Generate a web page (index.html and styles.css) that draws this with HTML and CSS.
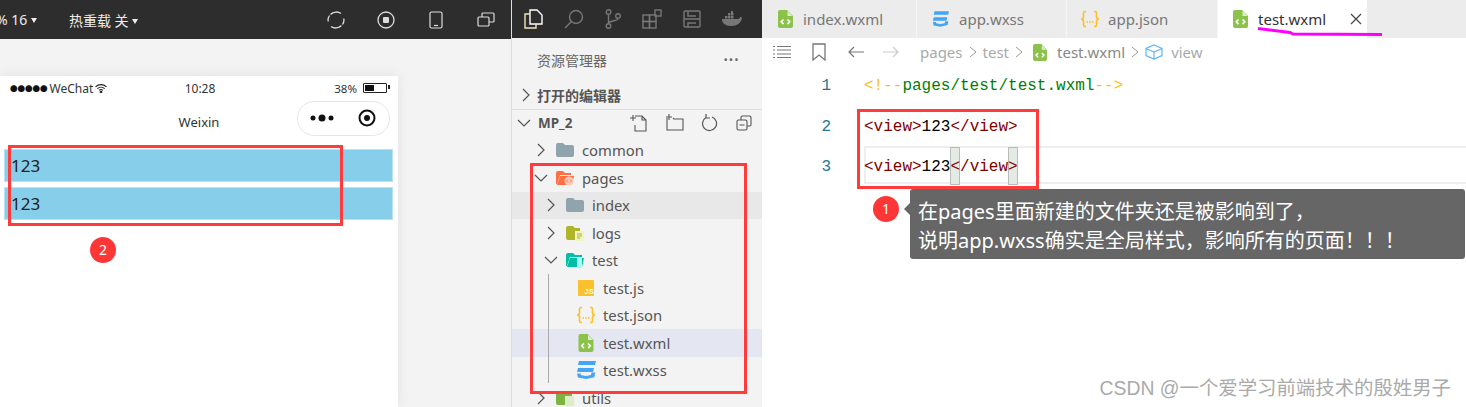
FILE: index.html
```html
<!DOCTYPE html>
<html lang="zh-CN">
<head>
<meta charset="UTF-8" />
<title>test.wxml</title>
<link rel="stylesheet" href="styles.css">
</head>
<body>

<svg class="defs" width="0" height="0">
  <symbol id="i-wxml" viewBox="0 0 15 18">
    <path d="M2 0h7l6 6v10a2 2 0 0 1-2 2H2a2 2 0 0 1-2-2V2a2 2 0 0 1 2-2z" fill="#8bc34a"/>
    <path d="M9.500 1v5h5z" fill="#dcedc8"/>
    <path d="M5.500 9.500l-2.300 2.300 2.300 2.300M9.500 9.500l2.300 2.300-2.300 2.300" fill="none" stroke="#fff" stroke-width="1.600"/>
  </symbol>
  <symbol id="i-wxss" viewBox="0 0 20 18">
    <path d="M3 0h17l-1 4H2z M2 7h16l-1 4H1z" fill="#42a5f5"/>
    <path d="M1 12.500l4 0-.4 1.500 5.400 1 5-1 .5-2.500h3.800l-1 4.700L10 18l-8-1.500z" fill="#42a5f5"/>
  </symbol>
  <symbol id="i-json" viewBox="0 0 20 18">
    <path d="M6 1.500H5A1.500 1.500 0 0 0 3.500 3v3.500C3.500 8 2.500 9 1 9c1.500 0 2.500 1 2.500 2.500V15A1.500 1.500 0 0 0 5 16.500h1M14 1.500h1A1.500 1.500 0 0 1 16.500 3v3.500C16.500 8 17.500 9 19 9c-1.500 0-2.500 1-2.500 2.500V15a1.500 1.500 0 0 1-1.500 1.500h-1" fill="none" stroke="#fbc02d" stroke-width="1.600"/>
    <path d="M6.500 12h1.500M9.300 12h1.500M12 12h1.500" stroke="#fbc02d" stroke-width="1.400"/>
  </symbol>
  <symbol id="i-js" viewBox="0 0 20 18">
    <rect x="2" y="1" width="16" height="16" rx="1" fill="#fbc02d"/>
    <text x="8.500" y="15" class="js-label">JS</text>
  </symbol>
  <symbol id="i-folder" viewBox="0 0 18 16">
    <path d="M2 1h5l2 2h7a2 2 0 0 1 2 2v8a2 2 0 0 1-2 2H2a2 2 0 0 1-2-2V3a2 2 0 0 1 2-2z" fill="#90a4ae"/>
  </symbol>
  <symbol id="i-right" viewBox="0 0 14 14">
    <path d="M4 1l6 6-6 6" fill="none" stroke="#555" stroke-width="1.200"/>
  </symbol>
  <symbol id="i-down" viewBox="0 0 14 14">
    <path d="M1 4l6 6 6-6" fill="none" stroke="#555" stroke-width="1.200"/>
  </symbol>
</svg>

<div class="page">

  <!-- simulator -->
  <section class="sim">
    <div class="sim-bar">
      <span class="sim-zoom">% 16 <i class="caret"></i></span>
      <span class="sim-reload">热重载 关 <i class="caret"></i></span>
      <div class="sim-tools">
        <svg width="18" height="18" viewBox="0 0 18 18" fill="none" stroke="#ddd" stroke-width="1.300"><path d="M3.500 3.500A8 8 0 0 1 14 2.500M14.500 14.500A8 8 0 0 1 4 15.500M1.200 10.500A8 8 0 0 1 2.500 4.500M16.800 7.500A8 8 0 0 1 15.500 13.500"/></svg>
        <svg width="18" height="18" viewBox="0 0 18 18" fill="none"><circle cx="9" cy="9" r="8" stroke="#ddd" stroke-width="1.300"/><rect x="6" y="6" width="6" height="6" rx="1" fill="#ddd"/></svg>
        <svg width="14" height="18" viewBox="0 0 14 18" fill="none" stroke="#ddd" stroke-width="1.200"><rect x="1" y="1" width="12" height="16" rx="1.500"/><path d="M5 14.500h4"/></svg>
        <svg width="18" height="16" viewBox="0 0 18 16" fill="none" stroke="#ddd" stroke-width="1.200"><rect x="1" y="5" width="11" height="9" rx="1"/><path d="M5 5V2a1 1 0 0 1 1-1h10a1 1 0 0 1 1 1v7a1 1 0 0 1-1 1h-4"/></svg>
      </div>
    </div>
    <div class="phone">
      <div class="status">
        <span class="status-left"><span class="signal">●●●●●</span> WeChat
          <svg width="12" height="9" viewBox="0 0 12 9" fill="none" stroke="#222" stroke-width="1.100"><path d="M.5 2.800a8 8 0 0 1 11 0M2.300 4.700a5.500 5.500 0 0 1 7.400 0M4 6.400a3 3 0 0 1 4 0"/><circle cx="6" cy="8" r=".8" fill="#222"/></svg>
        </span>
        <span class="status-time">10:28</span>
        <span class="status-right">38%
          <span class="battery"><span class="battery-level"></span></span>
        </span>
      </div>
      <div class="nav">
        <span></span>
        <span class="nav-title">Weixin</span>
        <div class="capsule">
          <svg width="24" height="8" viewBox="0 0 24 8" fill="#111"><circle cx="3" cy="4" r="2.500"/><circle cx="12" cy="4" r="3.500"/><circle cx="21" cy="4" r="2.500"/></svg>
          <svg width="18" height="18" viewBox="0 0 18 18" fill="none"><circle cx="9" cy="9" r="7.500" stroke="#111" stroke-width="2"/><circle cx="9" cy="9" r="3" fill="#111"/></svg>
        </div>
      </div>
      <div class="blocks">
        <div class="block">123</div>
        <div class="block">123</div>
      </div>
    </div>
  </section>

  <!-- explorer -->
  <section class="explorer">
    <div class="activity">
      <svg width="20" height="20" viewBox="0 0 20 20" fill="none" stroke="#fff" stroke-width="1.400"><path d="M7 1h7l5 5v9H7z"/><path d="M7 5H2v14h11v-4" stroke="#f5e6b8"/></svg>
      <svg width="20" height="20" viewBox="0 0 20 20" fill="none" stroke="#777" stroke-width="1.400"><circle cx="12" cy="8" r="6.500"/><path d="M7.500 12.500L1 19"/></svg>
      <svg width="16" height="20" viewBox="0 0 16 20" fill="none" stroke="#777" stroke-width="1.400"><circle cx="3.500" cy="3" r="2.300"/><circle cx="3.500" cy="17" r="2.300"/><circle cx="13" cy="7" r="2.300"/><path d="M3.500 5.500v9M13 9.500c0 3-9.500 2-9.500 5"/></svg>
      <svg width="20" height="20" viewBox="0 0 20 20" fill="none" stroke="#777" stroke-width="1.400"><rect x="1" y="6" width="6.500" height="6.500"/><rect x="1" y="12.500" width="6.500" height="6.500"/><rect x="7.500" y="12.500" width="6.500" height="6.500"/><rect x="7.500" y="6" width="6.500" height="6.500"/><rect x="13" y="1" width="6" height="6"/></svg>
      <svg width="18" height="18" viewBox="0 0 18 18" fill="none" stroke="#777" stroke-width="1.400"><rect x="1" y="1" width="16" height="16" rx="1"/><path d="M1 9h16M5 1v5h8M5 17v-4h8"/></svg>
      <svg width="20" height="16" viewBox="0 0 20 16" fill="#777"><path d="M0 8h16c1 0 2-1 2-2 1 0 2 0 2 1-1 5-5 8-11 8C3 15 0 12 0 8z"/><rect x="3" y="5" width="2.500" height="2.500"/><rect x="6" y="5" width="2.500" height="2.500"/><rect x="9" y="5" width="2.500" height="2.500"/><rect x="6" y="2" width="2.500" height="2.500"/><rect x="9" y="2" width="2.500" height="2.500"/><rect x="9" y="0" width="2" height="2"/></svg>
    </div>
    <div class="explorer-head">
      <span>资源管理器</span>
      <span class="more">···</span>
    </div>
    <div class="section-row">
      <svg width="14" height="14"><use href="#i-right"/></svg>
      <span>打开的编辑器</span>
    </div>
    <div class="project-row">
      <svg width="14" height="14"><use href="#i-down"/></svg>
      <span class="project-name">MP_2</span>
      <div class="project-tools">
        <svg width="18" height="18" viewBox="0 0 18 18" fill="none" stroke="#555" stroke-width="1.100"><path d="M5 2h7l4 4v11H5v-6M12 2v4h4M0 4h6M3 1v6"/></svg>
        <svg width="18" height="18" viewBox="0 0 18 18" fill="none" stroke="#555" stroke-width="1.100"><path d="M1 4v12h16V5H8L7 4M0 3h6M3 0v6"/></svg>
        <svg width="16" height="18" viewBox="0 0 16 18" fill="none" stroke="#555" stroke-width="1.200"><path d="M4 3.500A7 7 0 1 0 10 3M4 0v4h4"/></svg>
        <svg width="16" height="16" viewBox="0 0 16 16" fill="none" stroke="#555" stroke-width="1.100"><rect x="1" y="5" width="10" height="10" rx="1.500"/><path d="M5 5V2.500A1.500 1.500 0 0 1 6.500 1h7A1.500 1.500 0 0 1 15 2.500v7a1.500 1.500 0 0 1-1.500 1.500H11M3.500 10h5"/></svg>
      </div>
    </div>
    <ul class="tree">
      <li class="row lvl-1"><svg class="tw" width="14" height="14"><use href="#i-right"/></svg><svg class="ficon" width="18" height="16"><use href="#i-folder"/></svg><span>common</span></li>
      <li class="row lvl-1"><svg class="tw" width="14" height="14"><use href="#i-down"/></svg>
        <svg class="ficon" width="18" height="16" viewBox="0 0 18 16"><path d="M2 1h5l2 2h6v2H4L1 14H0V3a2 2 0 0 1 2-2z" fill="#ff7043"/><path d="M4 6h14l-2 9H1z" fill="#ff7043"/><circle cx="13" cy="11" r="4.500" fill="#ffccbc"/><path d="M12 9.500L10.500 11l1.500 1.500M14 9.500l1.500 1.500-1.500 1.500" fill="none" stroke="#ff7043"/></svg>
        <span>pages</span></li>
      <li class="row lvl-2 hover"><svg class="tw" width="14" height="14"><use href="#i-right"/></svg><svg class="ficon" width="18" height="16"><use href="#i-folder"/></svg><span>index</span></li>
      <li class="row lvl-2"><svg class="tw" width="14" height="14"><use href="#i-right"/></svg>
        <svg class="ficon" width="18" height="16" viewBox="0 0 18 16"><path d="M2 1h5l2 2h5v12H2a2 2 0 0 1-2-2V3a2 2 0 0 1 2-2z" fill="#afb42b"/><rect x="9" y="6" width="9" height="10" fill="#f0f4c3"/><path d="M11 9h5M11 11h5M11 13h3" stroke="#afb42b"/></svg>
        <span>logs</span></li>
      <li class="row lvl-2"><svg class="tw" width="14" height="14"><use href="#i-down"/></svg>
        <svg class="ficon" width="18" height="16" viewBox="0 0 18 16"><path d="M2 1h5l2 2h7v2H4L1 14H0V3a2 2 0 0 1 2-2z" fill="#00bfa5"/><path d="M4 6h14l-2 9H1z" fill="#00bfa5"/><rect x="11" y="6" width="5" height="10" fill="#a7ffeb"/></svg>
        <span>test</span></li>
      <li class="row lvl-3"><svg class="ficon" width="20" height="18"><use href="#i-js"/></svg><span>test.js</span></li>
      <li class="row lvl-3"><svg class="ficon" width="20" height="18"><use href="#i-json"/></svg><span>test.json</span></li>
      <li class="row lvl-3 selected"><svg class="ficon" width="20" height="18"><use href="#i-wxml"/></svg><span>test.wxml</span></li>
      <li class="row lvl-3"><svg class="ficon" width="20" height="18"><use href="#i-wxss"/></svg><span>test.wxss</span></li>
      <li class="row lvl-1"><svg class="tw" width="14" height="14"><use href="#i-right"/></svg>
        <svg class="ficon" width="18" height="16" viewBox="0 0 18 16"><path d="M2 1h5l2 2h7v4H9v8H2a2 2 0 0 1-2-2V3a2 2 0 0 1 2-2z" fill="#7cb342"/><rect x="9" y="6" width="9" height="10" fill="#dcedc8"/></svg>
        <span>utils</span></li>
    </ul>
    <div class="guide"></div>
  </section>

  <!-- editor -->
  <section class="editor">
    <div class="tabs">
      <div class="tab tab-1"><svg width="15" height="18"><use href="#i-wxml"/></svg><span>index.wxml</span></div>
      <div class="tab tab-2"><svg width="17" height="16"><use href="#i-wxss"/></svg><span>app.wxss</span></div>
      <div class="tab tab-3"><svg width="20" height="18"><use href="#i-json"/></svg><span>app.json</span></div>
      <div class="tab tab-active"><svg width="15" height="18"><use href="#i-wxml"/></svg><span>test.wxml</span>
        <svg class="tab-close" width="12" height="12" viewBox="0 0 12 12" stroke="#444" stroke-width="1.200"><path d="M1 1l10 10M11 1L1 11"/></svg>
      </div>
    </div>
    <div class="crumbs">
      <svg class="c-list" width="18" height="12" viewBox="0 0 18 12" stroke="#777"><path d="M0 .5h2M4 .5h14M0 4h2M4 4h14M0 8h2M4 8h14M0 11.500h2M4 11.500h14"/></svg>
      <svg class="c-mark" width="14" height="18" viewBox="0 0 14 18" fill="none" stroke="#777" stroke-width="1.300"><path d="M1 1h12v16l-6-5-6 5z"/></svg>
      <svg class="c-back" width="16" height="12" viewBox="0 0 16 12" fill="none" stroke="#777" stroke-width="1.200"><path d="M6 1L1 6l5 5M1 6h15"/></svg>
      <svg class="c-fwd" width="16" height="12" viewBox="0 0 16 12" fill="none" stroke="#ccc" stroke-width="1.200"><path d="M10 1l5 5-5 5M15 6H0"/></svg>
      <span class="c-light">pages</span>
      <svg class="c-sep" width="8" height="12" viewBox="0 0 8 12" fill="none" stroke="#999"><path d="M1 1l6 5-6 5"/></svg>
      <span class="c-light">test</span>
      <svg class="c-sep" width="8" height="12" viewBox="0 0 8 12" fill="none" stroke="#999"><path d="M1 1l6 5-6 5"/></svg>
      <svg class="c-file" width="14" height="17"><use href="#i-wxml"/></svg>
      <span class="c-name">test.wxml</span>
      <svg class="c-sep" width="8" height="12" viewBox="0 0 8 12" fill="none" stroke="#999"><path d="M1 1l6 5-6 5"/></svg>
      <svg class="c-box" width="18" height="16" viewBox="0 0 18 16" fill="none" stroke="#64b5f6" stroke-width="1.200"><path d="M9 1l8 3.500v7L9 15l-8-3.500v-7zM1 4.500L9 8l8-3.500M9 8v7"/></svg>
      <span class="c-light">view</span>
    </div>
    <div class="code">
      <div class="line line-first"><span class="num">1</span><span class="txt"><b class="c-y">&lt;!--</b><b class="c-g">pages/test/test.wxml</b><b class="c-y">--&gt;</b></span></div>
      <div class="line"><span class="num">2</span><span class="txt"><b class="c-t">&lt;view&gt;</b>123<b class="c-t">&lt;/view&gt;</b></span></div>
      <div class="line"><span class="num">3</span><span class="txt txt-active"><b class="c-t">&lt;view&gt;</b>123<b class="c-t"><i class="match">&lt;</i>/view<i class="match">&gt;</i></b></span></div>
    </div>
  </section>

  <!-- annotations -->
  <div class="mark mark-sim"></div>
  <div class="mark mark-tree"></div>
  <div class="mark mark-code"></div>
  <span class="badge badge-1">1</span>
  <span class="badge badge-2">2</span>
  <div class="tip">在pages里面新建的文件夹还是被影响到了，<br>说明app.wxss确实是全局样式，影响所有的页面！！！</div>
  <svg class="scribble" width="130" height="10" viewBox="0 0 130 10" fill="none" stroke="#f0f" stroke-width="3"><path d="M1 1.500L33 5.500 36 7 125 7.500"/></svg>
  <div class="watermark">CSDN @一个爱学习前端技术的殷姓男子</div>
</div>

</body>
</html>
```

FILE: styles.css
```css
* {
  box-sizing: border-box;
}

body {
  margin: 0;
  font-family: "Noto Sans", "Noto Sans CJK SC", sans-serif;
  background-color: #fff;
}

.defs {
  position: absolute;
}

.js-label {
  font-family: "Liberation Sans", sans-serif;
  font-size: 7.500px;
  font-weight: bold;
  fill: #fff;
}

.page {
  position: relative;
  display: flex;
  height: 407px;
  overflow: hidden;
}

/* simulator */
.sim {
  width: 511px;
  flex-shrink: 0;
  background-color: #f3f3f3;
  overflow: hidden;
}

.sim-bar {
  display: flex;
  align-items: center;
  height: 39px;
  background-color: #2d2d2d;
  color: #eee;
  font-size: 14px;
}

.sim-zoom {
  margin-left: -4px;
  white-space: nowrap;
}

.sim-reload {
  margin-left: 32px;
  white-space: nowrap;
}

.caret {
  display: inline-block;
  border: 3.500px solid transparent;
  border-top: 5px solid #eee;
  border-bottom: 0;
  vertical-align: 2px;
}

.sim-tools {
  display: grid;
  grid-template-columns: repeat(4, 50px);
  justify-items: center;
  align-items: center;
  margin-left: auto;
}

.phone {
  width: 398px;
  height: 331px;
  margin-top: 37px;
  background-color: #fff;
  box-shadow: 0 0 12px rgba(0,0,0,0.08);
  color: #333;
}

.status {
  display: grid;
  grid-template-columns: 1fr auto 1fr;
  align-items: center;
  height: 24px;
  padding: 0 8px 0 10px;
  font-size: 12px;
}

.status-left {
  display: flex;
  align-items: center;
  gap: 2px;
  white-space: nowrap;
}

.signal {
  font-size: 7.500px;
  color: #111;
}

.status-right {
  display: flex;
  align-items: center;
  justify-content: flex-end;
  gap: 6px;
  font-size: 11.500px;
}

.battery {
  position: relative;
  display: block;
  width: 24px;
  height: 10px;
  margin-right: 3px;
  padding: 1px;
  border: 1px solid #222;
  border-radius: 1px;
}

.battery::after {
  content: "";
  position: absolute;
  right: -4px;
  top: 1px;
  width: 2px;
  height: 4px;
  background-color: #222;
}

.battery-level {
  display: block;
  width: 9px;
  height: 6px;
  background-color: #111;
}

.nav {
  display: grid;
  grid-template-columns: 1fr auto 1fr;
  align-items: center;
  height: 36px;
  padding-right: 8px;
}

.nav-title {
  margin: 8px 0 0 8px;
  font-size: 13px;
}

.capsule {
  display: flex;
  align-items: center;
  justify-content: space-between;
  justify-self: end;
  width: 93px;
  height: 35px;
  padding: 0 13px 0 12px;
  border: 1px solid #e6e6e6;
  border-radius: 18px;
}

.blocks {
  display: flex;
  flex-direction: column;
  gap: 5px;
  margin-top: 13px;
  padding: 0 5px 0 4px;
}

.block {
  height: 33px;
  padding-left: 7px;
  line-height: 33px;
  font-size: 17px;
  background-color: #87ceeb;
  color: #222;
  outline: 1px solid #b9e2f2;
  outline-offset: -1px;
}

/* explorer */
.explorer {
  position: relative;
  width: 251px;
  flex-shrink: 0;
  border-left: 1px solid #ddd;
  background-color: #f3f3f3;
  color: #555;
}

.activity {
  display: flex;
  align-items: center;
  justify-content: space-between;
  height: 38px;
  padding: 0 20px 0 11px;
  background-color: #2d2d2d;
}

.explorer-head {
  display: flex;
  align-items: center;
  justify-content: space-between;
  height: 43px;
  padding: 0 23px 0 25px;
  font-size: 14px;
  color: #666;
}

.more {
  font-size: 20px;
  line-height: 1;
}

.section-row {
  display: flex;
  align-items: center;
  gap: 4px;
  height: 29px;
  padding-left: 7px;
  border-bottom: 1px solid #ddd;
  font-size: 14px;
  font-weight: bold;
}

.project-row {
  display: flex;
  align-items: center;
  height: 26.500px;
  padding-left: 5px;
  font-size: 13.500px;
  font-weight: bold;
}

.project-name {
  margin-left: 7px;
}

.project-tools {
  display: flex;
  align-items: center;
  gap: 18px;
  margin-left: auto;
  padding-right: 10px;
}

.tree {
  margin: 0;
  padding: 0;
  list-style: none;
}

.row {
  display: flex;
  align-items: center;
  height: 27.500px;
  font-size: 14.800px;
  white-space: nowrap;
}

.row .tw,
.row .ficon {
  flex-shrink: 0;
}

.row .tw + .ficon {
  margin-left: 8px;
}

.row span {
  margin-left: 8px;
}

.lvl-1 {
  padding-left: 22px;
}

.lvl-2 {
  padding-left: 32px;
}

.lvl-3 {
  padding-left: 64px;
}

.lvl-3 span {
  margin-left: 7px;
}

.hover {
  background-color: #e8e8e8;
}

.selected {
  background-color: #e4e6f1;
}

.guide {
  position: absolute;
  left: 36px;
  top: 274px;
  width: 1px;
  height: 109px;
  background-color: #aaa;
}

/* editor */
.editor {
  flex: 1;
  min-width: 0;
}

.tabs {
  display: flex;
  height: 38px;
  background-color: #ececec;
  color: #777;
  font-size: 15px;
}

.tab {
  display: flex;
  align-items: center;
  gap: 10px;
  width: 150px;
  padding-left: 15px;
  border-right: 1px solid #f5f5f5;
}

.tab-1 {
  width: 155px;
  padding-left: 16px;
}

.tab-3 {
  width: 151px;
  padding-left: 13px;
  gap: 8px;
}

.tab-active {
  width: 149px;
  background-color: #fff;
  border-right: 0;
  color: #333;
}

.tab-close {
  margin-left: 14px;
}

.crumbs {
  display: flex;
  align-items: center;
  height: 28px;
  padding-left: 11px;
  font-size: 15px;
  color: #888;
}

.c-mark {
  margin-left: 21px;
}

.c-back {
  margin-left: 22px;
}

.c-fwd {
  margin-left: 19px;
}

.c-light {
  color: #aaa;
}

.c-fwd + .c-light {
  margin-left: 21px;
}

.c-sep {
  margin: 0 6px;
}

.c-file {
  margin-left: 4px;
}

.c-name {
  margin-left: 10px;
}

.c-box {
  margin: 0 8px 0 0;
}

.code {
  font-family: "Liberation Mono", monospace;
  font-size: 16px;
}

.line {
  display: flex;
  align-items: flex-start;
  height: 40px;
  line-height: 40px;
}

.line-first {
  height: 41px;
}

.num {
  width: 69px;
  text-align: right;
  color: #237893;
}

.txt {
  flex: 1;
  margin-left: 33px;
  white-space: pre;
  color: #000;
}

.txt b {
  font-weight: normal;
}

.txt-active {
  height: 38px;
  margin-top: -1px;
  padding-top: 1px;
  box-shadow: inset 2px 2px 0 #eee, inset 0 -2px 0 #eee;
}

.c-y {
  color: #ffc000;
}

.c-g {
  color: #008000;
}

.c-t {
  color: #800000;
}

.match {
  font-style: normal;
  background-color: #e4ebe4;
  box-shadow: inset 0 0 0 1px #bbb;
  padding: 11px 0 9px;
}

/* annotations */
.mark {
  position: absolute;
  border: 3px solid #ff3b3b;
}

.mark-sim {
  left: 8px;
  top: 145px;
  width: 335px;
  height: 81px;
}

.mark-tree {
  left: 530px;
  top: 163px;
  width: 217px;
  height: 231px;
}

.mark-code {
  left: 857px;
  top: 109px;
  width: 182px;
  height: 80px;
}

.badge {
  position: absolute;
  width: 26px;
  height: 26px;
  border-radius: 50%;
  background-color: #ff3636;
  color: #fff;
  font-size: 14px;
  line-height: 26px;
  text-align: center;
}

.badge-1 {
  left: 873px;
  top: 196px;
}

.badge-2 {
  left: 90px;
  top: 237px;
}

.tip {
  position: absolute;
  left: 910px;
  top: 189px;
  width: 555px;
  height: 70px;
  padding: 8px;
  border-radius: 3px;
  background-color: #666;
  color: #fff;
  font-size: 20px;
  line-height: 29px;
}

.tip::before {
  content: "";
  position: absolute;
  left: -6px;
  top: 14px;
  border: 6px solid transparent;
  border-left: 0;
  border-right-color: #666;
}

.scribble {
  position: absolute;
  left: 1257px;
  top: 27px;
}

.watermark {
  position: absolute;
  right: 15px;
  bottom: 6px;
  font-family: "Liberation Sans", "Noto Sans CJK SC", sans-serif;
  font-size: 19.400px;
  color: #aaa;
}
```
